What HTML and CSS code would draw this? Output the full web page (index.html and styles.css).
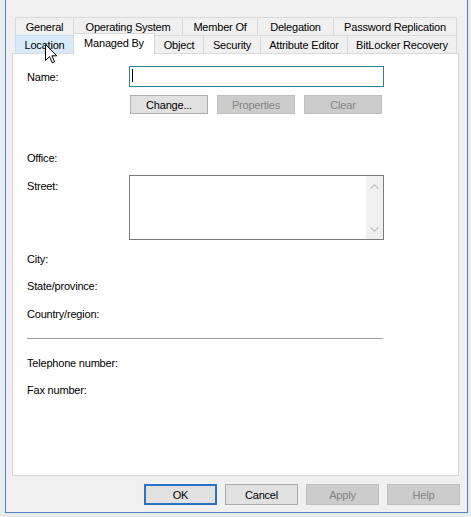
FILE: index.html
```html
<!DOCTYPE html>
<html>
<head>
<meta charset="utf-8">
<title>Properties</title>
<link rel="stylesheet" href="styles.css">
</head>
<body>
<div class="window">
  <div class="tabs">
    <div class="tab-row">
      <div class="tab w-general">General</div>
      <div class="tab w-os">Operating System</div>
      <div class="tab w-member">Member Of</div>
      <div class="tab w-deleg">Delegation</div>
      <div class="tab w-pwd">Password Replication</div>
    </div>
    <div class="tab-row">
      <div class="tab hover w-location">Location</div>
      <div class="tab selected w-managed">Managed By</div>
      <div class="tab w-object">Object</div>
      <div class="tab w-security">Security</div>
      <div class="tab w-attr">Attribute Editor</div>
      <div class="tab w-bitlocker">BitLocker Recovery</div>
    </div>
  </div>

  <div class="panel">
    <div class="row">
      <span class="label name-label">Name:</span>
      <div class="textbox focused"><span class="caret"></span></div>
    </div>
    <div class="btn-row">
      <div class="btn">Change...</div>
      <div class="btn disabled">Properties</div>
      <div class="btn disabled">Clear</div>
    </div>
    <div class="line-label office">Office:</div>
    <div class="row street-row">
      <span class="label street-label">Street:</span>
      <div class="textarea">
        <div class="scrollbar">
          <svg class="chev" width="9" height="5" viewBox="0 0 9 5"><path d="M0.5 4.5 L4.5 0.8 L8.5 4.5" fill="none" stroke="#c3c3c3" stroke-width="1.2"/></svg>
          <svg class="chev" width="9" height="5" viewBox="0 0 9 5"><path d="M0.5 0.5 L4.5 4.2 L8.5 0.5" fill="none" stroke="#c3c3c3" stroke-width="1.2"/></svg>
        </div>
      </div>
    </div>
    <div class="line-label city">City:</div>
    <div class="line-label state">State/province:</div>
    <div class="line-label country">Country/region:</div>
    <div class="separator"></div>
    <div class="line-label phone">Telephone number:</div>
    <div class="line-label fax">Fax number:</div>
  </div>

  <div class="dialog-buttons">
    <div class="dbtn default">OK</div>
    <div class="dbtn">Cancel</div>
    <div class="dbtn disabled">Apply</div>
    <div class="dbtn disabled">Help</div>
  </div>
</div>
<svg class="cursor" width="13" height="20" viewBox="0 0 13 20"><path d="M0.5 0.5 L0.5 16.5 L4.5 12.7 L7.3 18.8 L9.6 17.8 L6.9 11.8 L11.8 11.8 Z" fill="#fff" stroke="#000" stroke-width="1" stroke-linejoin="miter"/></svg>
</body>
</html>
```

FILE: styles.css
```css
* { box-sizing: border-box; }
html, body { margin: 0; padding: 0; }
body {
  width: 471px;
  height: 517px;
  overflow: hidden;
  background: #e9ecef;
  font-family: "Liberation Sans", Arial, sans-serif;
  font-size: 11px;
  letter-spacing: -0.2px;
  color: #000;
}
.window {
  margin-left: 5px;
  width: 463px;
  height: 513px;
  background: #f0f0f0;
  border-left: 1px solid #4a84c4;
  border-right: 1px solid #4a84c4;
  border-bottom: 1px solid #4a84c4;
  padding-top: 17px;
}
.tabs { margin-left: 9px; }
.tab-row {
  display: flex;
  align-items: flex-end;
  height: 18px;
}
.tab {
  flex: none;
  height: 18px;
  border: 1px solid #d9d9d9;
  border-bottom: none;
  margin-right: -1px;
  padding-top: 3px;
  line-height: 13px;
  text-align: center;
  white-space: nowrap;
  background: #f0f0f0;
}
.tab.hover { background: #d8eaf9; border-color: #c9def2; }
.tab.selected {
  height: 21px;
  margin-bottom: -1px;
  background: #fff;
  position: relative;
  z-index: 1;
}
.w-general { width: 59px; }
.w-os { width: 110px; }
.w-member { width: 76px; }
.w-deleg { width: 77px; }
.w-pwd { width: 124px; }
.w-location { width: 59px; }
.w-managed { width: 82px; }
.w-object { width: 50px; }
.w-security { width: 58px; }
.w-attr { width: 88px; }
.w-bitlocker { width: 110px; }

.panel {
  margin-left: 6px;
  width: 447px;
  height: 423px;
  background: #fff;
  border: 1px solid #d9d9d9;
  padding: 12px 0 0 14px;
}
.row { display: flex; align-items: center; }
.label { flex: none; width: 102px; line-height: 13px; }
.name-label { margin-top: 1px; }
.textbox {
  width: 255px;
  height: 21px;
  background: #fff;
  border: 1px solid #337f93;
  display: flex;
  align-items: flex-start;
  padding-left: 2px;
}
.caret { width: 1px; height: 13px; margin-top: 2px; background: #000; }
.btn-row {
  display: flex;
  gap: 9px;
  margin-top: 8px;
  margin-left: 103px;
}
.btn {
  width: 78px;
  height: 19px;
  border: 1px solid #adadad;
  background: #e1e1e1;
  text-align: center;
  line-height: 18px;
}
.btn.disabled { background: #cccccc; border-color: #bfbfbf; color: #838383; }

.line-label { line-height: 13px; height: 13px; }
.office { margin-top: 38px; }
.street-row { margin-top: 10px; align-items: flex-start; }
.street-label { margin-top: 5px; }
.textarea {
  width: 255px;
  height: 65px;
  border: 1px solid #7a7a7a;
  background: #fff;
  display: flex;
  justify-content: flex-end;
}
.scrollbar {
  width: 17px;
  height: 63px;
  background: #f0f0f0;
  display: flex;
  flex-direction: column;
  justify-content: space-between;
  align-items: center;
  padding: 8px 0 7px;
}
.chev { display: block; }
.city { margin-top: 13px; }
.state { margin-top: 14px; }
.country { margin-top: 15px; }
.separator { margin-top: 17px; width: 356px; height: 1px; background: #a0a0a0; }
.phone { margin-top: 18px; }
.fax { margin-top: 14px; }

.dialog-buttons {
  display: flex;
  justify-content: flex-end;
  gap: 8px;
  margin-top: 8px;
  padding-right: 7px;
}
.dbtn {
  width: 73px;
  height: 21px;
  border: 1px solid #adadad;
  background: #e1e1e1;
  text-align: center;
  line-height: 20px;
}
.dbtn.default { border: 2px solid #2a72c4; line-height: 18px; }
.dbtn.disabled { background: #cccccc; border-color: #bfbfbf; color: #838383; }

.cursor { position: absolute; left: 45px; top: 44px; }
```
